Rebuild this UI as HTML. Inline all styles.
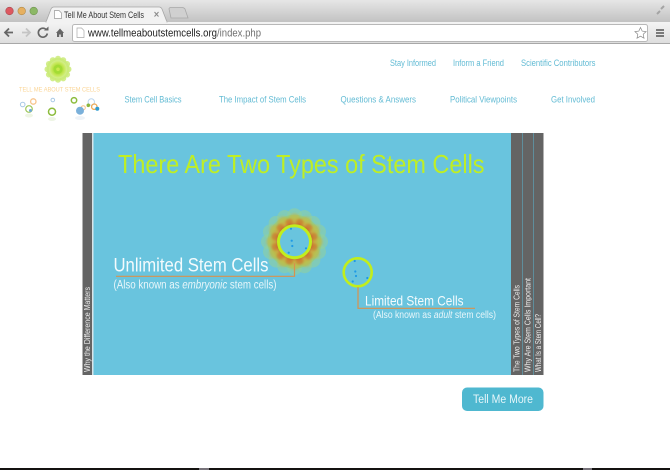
<!DOCTYPE html>
<html><head><meta charset="utf-8"><title>Tell Me About Stem Cells</title>
<style>
html,body{margin:0;padding:0;background:#fff;width:670px;height:470px;overflow:hidden}
svg{display:block;position:absolute;left:0;top:0}
text{font-family:"Liberation Sans",sans-serif}
</style></head><body>
<svg width="670" height="470" viewBox="0 0 670 470" xmlns="http://www.w3.org/2000/svg">
<defs>
<linearGradient id="top" x1="0" y1="0" x2="0" y2="1"><stop offset="0" stop-color="#e6e6e6"/><stop offset="1" stop-color="#c2c2c2"/></linearGradient>
<linearGradient id="bar" x1="0" y1="0" x2="0" y2="1"><stop offset="0" stop-color="#f4f4f4"/><stop offset="1" stop-color="#dedede"/></linearGradient>
<radialGradient id="halo" cx="50%" cy="50%" r="50%"><stop offset="0" stop-color="#c8602c"/><stop offset=".62" stop-color="#c8602c"/><stop offset=".74" stop-color="#d09a3a"/><stop offset=".88" stop-color="#a8c860"/><stop offset="1" stop-color="#8ccc90"/></radialGradient>
<radialGradient id="burst" cx="50%" cy="50%" r="50%"><stop offset="0" stop-color="#9ad632"/><stop offset=".5" stop-color="#b4e040"/><stop offset=".75" stop-color="#c9ea60"/><stop offset="1" stop-color="#d4ee90"/></radialGradient>
<filter id="soft" x="-20%" y="-20%" width="140%" height="140%"><feGaussianBlur stdDeviation="1"/></filter>
<g id="b1"><circle cx="26" cy="0" r="7.500" fill="#8fd0a0" opacity=".6"/></g>
<g id="b2"><circle cx="23" cy="0" r="5.500" fill="#c8b840" opacity=".55"/></g>
<g id="b3"><circle cx="20" cy="0" r="3.800" fill="#cc6a2c" opacity=".55"/></g>
<g id="l1"><circle cx="10.500" cy="0" r="3" fill="#c8ea70" opacity=".8"/></g>
</defs>

<!-- browser chrome -->
<rect x="0" y="0" width="670" height="22" fill="url(#top)"/>
<rect x="0" y="22" width="670" height="21" fill="url(#bar)"/>
<rect x="0" y="43" width="670" height="1" fill="#a8a8a8"/>
<circle cx="9.500" cy="11" r="3.800" fill="#dd5860" stroke="#a84a50" stroke-width=".6"/>
<circle cx="21.700" cy="11" r="3.800" fill="#e6b060" stroke="#b08a4a" stroke-width=".6"/>
<circle cx="33.700" cy="11" r="3.800" fill="#8cb866" stroke="#6f9450" stroke-width=".6"/>
<path d="M46 22 L51 9 Q52 7 54 7 L159 7 Q161 7 162 9 L167 22Z" fill="#f2f2f2" stroke="#a6a6a6" stroke-width=".8"/>
<path d="M169 9 Q169 7.500 171 7.500 L182 7.500 Q184 7.500 185 9 L188 18 L171 18Z" fill="#d0d0d0" stroke="#a8a8a8" stroke-width=".8"/>
<rect x="46.500" y="21" width="120" height="2" fill="#f2f2f2"/>
<path d="M54.500 10.500h4.500l2.500 2.500v5.500h-7z" fill="#fff" stroke="#999" stroke-width=".7"/>
<text x="64" y="18" font-size="9.500" fill="#333" textLength="80" lengthAdjust="spacingAndGlyphs">Tell Me About Stem Cells</text>
<path d="M154.500 12l4 4.500M158.500 12l-4 4.500" stroke="#888" stroke-width="1" fill="none"/>
<path d="M5 32.500h8M9 28.500l-4 4 4 4" stroke="#666" stroke-width="1.800" fill="none"/>
<path d="M22 32.500h8M26 28.500l4 4-4 4" stroke="#c4c4c4" stroke-width="1.800" fill="none"/>
<path d="M46.500 30a4.500 4.500 0 1 0 .8 3.500" stroke="#666" stroke-width="1.700" fill="none"/>
<path d="M44 30.500h4.500v-4z" fill="#666"/>
<path d="M56 33l4-4.500 4 4.500h-1v4h-2.200v-2.500h-1.600v2.500h-2.200v-4z" fill="#666"/>
<rect x="72.500" y="24.500" width="575" height="17" rx="2" fill="#fff" stroke="#b8b8b8"/>
<path d="M77 28h4.500l2.500 2.500v7h-7z" fill="#fff" stroke="#aaa" stroke-width=".7"/>
<text x="88" y="36.500" font-size="11" fill="#222" textLength="129" lengthAdjust="spacingAndGlyphs">www.tellmeaboutstemcells.org</text>
<text x="217" y="36.500" font-size="11" fill="#707070" textLength="44" lengthAdjust="spacingAndGlyphs">/index.php</text>
<path d="M640.500 27.500l1.700 3.600 3.900.5-2.900 2.700.8 3.900-3.500-2-3.500 2 .8-3.900-2.900-2.700 3.900-.5z" fill="#fff" stroke="#888" stroke-width=".7"/>
<path d="M656 30h8M656 33h8M656 36h8" stroke="#555" stroke-width="1.400"/>
<path d="M657 14l3-3M664 6l-3 3" stroke="#a4a4a4" stroke-width="2" fill="none"/>

<!-- logo -->
<g transform="translate(58 69.300)">
<circle r="11.500" fill="#d4eea0"/>
<use href="#l1"/><use href="#l1" transform="rotate(30)"/><use href="#l1" transform="rotate(60)"/><use href="#l1" transform="rotate(90)"/><use href="#l1" transform="rotate(120)"/><use href="#l1" transform="rotate(150)"/><use href="#l1" transform="rotate(180)"/><use href="#l1" transform="rotate(210)"/><use href="#l1" transform="rotate(240)"/><use href="#l1" transform="rotate(270)"/><use href="#l1" transform="rotate(300)"/><use href="#l1" transform="rotate(330)"/>
<circle r="9" fill="url(#burst)"/>
<circle r="4.500" fill="#a2dc34"/>
<circle r="1.800" fill="#c8ea4c"/>
</g>
<text x="19" y="91.500" font-size="6.800" fill="#fbd596" textLength="81" lengthAdjust="spacingAndGlyphs">TELL ME ABOUT STEM CELLS</text>
<ellipse cx="29" cy="115.500" rx="4" ry="2" fill="#eef5e4"/><ellipse cx="52" cy="119" rx="4" ry="2" fill="#eef5e4"/><ellipse cx="80" cy="118" rx="5" ry="2" fill="#eef3f8"/>
<g fill="none">
<circle cx="22.700" cy="104.500" r="2.300" stroke="#a9c9e6" stroke-width="1"/>
<circle cx="33.300" cy="101.500" r="2.700" stroke="#f8c48c" stroke-width="1.300"/>
<circle cx="29" cy="109" r="3.300" stroke="#9ec85c" stroke-width="1.200"/>
<circle cx="52.800" cy="100" r="1.800" stroke="#a9c9e6" stroke-width="1"/>
<circle cx="52" cy="111.700" r="3.500" stroke="#8cbc3c" stroke-width="1.500"/>
<circle cx="74" cy="100.300" r="2.700" stroke="#8cbc3c" stroke-width="1.500"/>
<circle cx="91.300" cy="102" r="3.200" stroke="#bcd6ee" stroke-width="1"/>
<circle cx="83.300" cy="107.700" r="2" stroke="#f8c48c" stroke-width="1"/>
<circle cx="94.300" cy="106.700" r="2.700" stroke="#f0a850" stroke-width="1.300"/>
</g>
<circle cx="30.500" cy="110.500" r="1.500" fill="#6ea9d6"/>
<circle cx="80" cy="110.700" r="4" fill="#7ab0da"/>
<circle cx="88.300" cy="105.300" r="1.800" fill="#8cb63c"/>
<circle cx="97.300" cy="108.700" r="2" fill="#2f9cd0"/>

<!-- nav -->
<g fill="#62bbd4" font-size="9.500">
<text x="390" y="66" textLength="46" lengthAdjust="spacingAndGlyphs" font-size="8.800">Stay Informed</text>
<text x="453" y="66" textLength="51" lengthAdjust="spacingAndGlyphs" font-size="8.800">Inform a Friend</text>
<text x="521" y="66" textLength="74.500" lengthAdjust="spacingAndGlyphs" font-size="8.800">Scientific Contributors</text>
<text x="124.500" y="102.500" textLength="57" lengthAdjust="spacingAndGlyphs">Stem Cell Basics</text>
<text x="219" y="102.500" textLength="87" lengthAdjust="spacingAndGlyphs">The Impact of Stem Cells</text>
<text x="340.500" y="102.500" textLength="75.500" lengthAdjust="spacingAndGlyphs">Questions &amp; Answers</text>
<text x="450" y="102.500" textLength="67" lengthAdjust="spacingAndGlyphs">Political Viewpoints</text>
<text x="551" y="102.500" textLength="44" lengthAdjust="spacingAndGlyphs">Get Involved</text>
</g>

<!-- panel -->
<rect x="82.500" y="133" width="9.500" height="242" fill="#646464"/>
<rect x="92" y="133" width="1.500" height="242" fill="#d8e4e8"/>
<rect x="93.500" y="133" width="417.500" height="242" fill="#69c4de"/>
<rect x="511" y="133" width="32.500" height="242" fill="#646464"/>
<rect x="522" y="133" width="1" height="242" fill="#5f8e9c"/>
<rect x="533" y="133" width="1" height="242" fill="#5f8e9c"/>

<text x="118" y="173" font-size="26" fill="#bfee24" textLength="366.500" lengthAdjust="spacingAndGlyphs">There Are Two Types of Stem Cells</text>

<!-- large cell -->
<g transform="translate(294.500 241.700)">
<use href="#b1"/><use href="#b1" transform="rotate(22.500)"/><use href="#b1" transform="rotate(45)"/><use href="#b1" transform="rotate(67.500)"/><use href="#b1" transform="rotate(90)"/><use href="#b1" transform="rotate(112.500)"/><use href="#b1" transform="rotate(135)"/><use href="#b1" transform="rotate(157.500)"/><use href="#b1" transform="rotate(180)"/><use href="#b1" transform="rotate(202.500)"/><use href="#b1" transform="rotate(225)"/><use href="#b1" transform="rotate(247.500)"/><use href="#b1" transform="rotate(270)"/><use href="#b1" transform="rotate(292.500)"/><use href="#b1" transform="rotate(315)"/><use href="#b1" transform="rotate(337.500)"/>
<circle r="27" fill="url(#halo)" opacity=".92"/>
<g filter="url(#soft)">
<use href="#b2"/><use href="#b2" transform="rotate(30)"/><use href="#b2" transform="rotate(60)"/><use href="#b2" transform="rotate(90)"/><use href="#b2" transform="rotate(120)"/><use href="#b2" transform="rotate(150)"/><use href="#b2" transform="rotate(180)"/><use href="#b2" transform="rotate(210)"/><use href="#b2" transform="rotate(240)"/><use href="#b2" transform="rotate(270)"/><use href="#b2" transform="rotate(300)"/><use href="#b2" transform="rotate(330)"/>
<use href="#b3" transform="rotate(15)"/><use href="#b3" transform="rotate(45)"/><use href="#b3" transform="rotate(75)"/><use href="#b3" transform="rotate(105)"/><use href="#b3" transform="rotate(135)"/><use href="#b3" transform="rotate(165)"/><use href="#b3" transform="rotate(195)"/><use href="#b3" transform="rotate(225)"/><use href="#b3" transform="rotate(255)"/><use href="#b3" transform="rotate(285)"/><use href="#b3" transform="rotate(315)"/><use href="#b3" transform="rotate(345)"/>
</g>
<circle r="16" fill="#69c4de" stroke="#c2ee1c" stroke-width="3"/>
</g>
<g fill="#1e9ae6">
<circle cx="291" cy="228.700" r="1.100"/><circle cx="291.700" cy="240.700" r="1.100"/><circle cx="292.300" cy="246" r="1.100"/><circle cx="288.700" cy="252.700" r="1.100"/><circle cx="306" cy="248.300" r="1.100"/>
</g>
<!-- small cell -->
<circle cx="357.700" cy="272.300" r="14" fill="#69c4de" stroke="#c2ee1c" stroke-width="2.600"/>
<g fill="#1e9ae6">
<circle cx="354.700" cy="261" r="1.100"/><circle cx="355.300" cy="271.500" r="1.100"/><circle cx="356" cy="276" r="1.100"/><circle cx="352.700" cy="281.500" r="1.100"/><circle cx="367.300" cy="278" r="1.100"/>
</g>
<!-- lines -->
<path d="M116 276.300H294.500V263" stroke="#d8914e" stroke-width="1.200" fill="none"/>
<path d="M358 287V308.300H475" stroke="#d8914e" stroke-width="1.200" fill="none"/>
<!-- labels -->
<g fill="#fff">
<text x="113.500" y="271.500" font-size="19" textLength="155" lengthAdjust="spacingAndGlyphs" fill="#f4fbfd">Unlimited Stem Cells</text>
<text x="113.500" y="288.500" font-size="11.500" textLength="163" lengthAdjust="spacingAndGlyphs" fill="#e8f6fa">(Also known as <tspan font-style="italic">embryonic</tspan> stem cells)</text>
<text x="365" y="305.500" font-size="14" textLength="98.500" lengthAdjust="spacingAndGlyphs" fill="#f4fbfd">Limited Stem Cells</text>
<text x="373" y="318" font-size="10.300" textLength="123" lengthAdjust="spacingAndGlyphs" fill="#e8f6fa">(Also known as <tspan font-style="italic">adult</tspan> stem cells)</text>
</g>
<!-- rotated tabs -->
<g fill="#eeeeee" font-size="8.400">
<text transform="translate(90 372) rotate(-90)" textLength="85" lengthAdjust="spacingAndGlyphs">Why the Difference Matters</text>
<text transform="translate(519.500 372) rotate(-90)" textLength="87" lengthAdjust="spacingAndGlyphs">The Two Types of Stem Cells</text>
<text transform="translate(530.500 372) rotate(-90)" textLength="94" lengthAdjust="spacingAndGlyphs">Why Are Stem Cells Important</text>
<text transform="translate(541 372) rotate(-90)" textLength="58" lengthAdjust="spacingAndGlyphs">What Is a Stem Cell?</text>
</g>

<!-- button -->
<rect x="462" y="387.500" width="81.500" height="23.500" rx="5" fill="#4fb8d0"/>
<text x="473" y="403" font-size="11.500" fill="#e6f6fa" textLength="60" lengthAdjust="spacingAndGlyphs">Tell Me More</text>

<!-- bottom strip -->
<rect x="0" y="468" width="670" height="2" fill="#141210"/>
<rect x="199" y="468" width="10" height="2" fill="#77737a"/>
<rect x="583" y="468" width="9" height="2" fill="#77737a"/>
</svg>
</body></html>
